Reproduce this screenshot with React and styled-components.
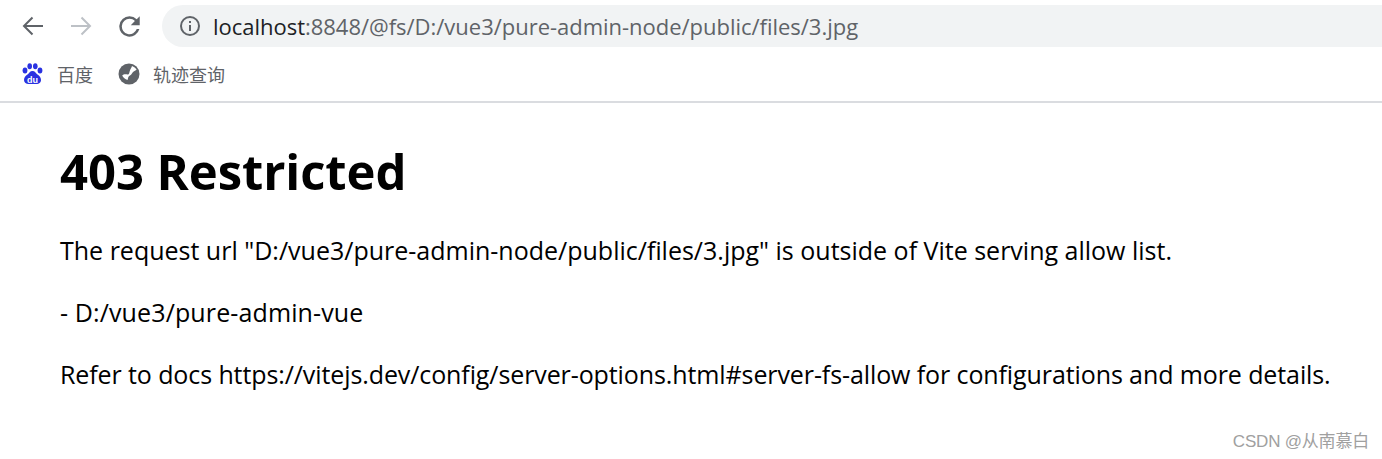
import React from 'react';
import styled, { createGlobalStyle } from 'styled-components';

const Global = createGlobalStyle`
  html, body { margin: 0; padding: 0; background: #fff; }
  body { font-family: "Open Sans", "Noto Sans CJK SC", sans-serif; overflow: hidden; }
`;
const Page = styled.div`
  position: relative;
  width: 1382px;
  height: 459px;
  overflow: hidden;
`;
const Toolbar = styled.div`
  display: flex;
  align-items: center;
  height: 42px;
  padding: 5px 0 0 20px;
`;
const NavButton = styled.div`
  display: flex;
  width: 26px;
  height: 26px;
  align-items: center;
  justify-content: center;
  margin-right: 22px;
  &:nth-child(3) { margin-right: 20px; }
`;
const AddressBar = styled.div`
  flex: 1;
  display: flex;
  align-items: center;
  height: 42px;
  padding-left: 17px;
  background: #f1f3f4;
  border-radius: 21px 0 0 21px;
`;
const Url = styled.span`
  margin-left: 12px;
  font-size: 22px;
  letter-spacing: -0.02px;
  color: #5f6368;
  white-space: nowrap;
`;
const Host = styled.span`
  color: #202124;
`;
const BookmarkBar = styled.div`
  display: flex;
  align-items: center;
  height: 56px;
  padding-left: 21px;
  border-bottom: 2px solid #dadce0;
  box-sizing: border-box;
  gap: 25px;
`;
const Bookmark = styled.div`
  display: flex;
  align-items: center;
  font-family: "Noto Sans CJK SC", sans-serif;
  font-size: 18px;
  color: #5f6368;
  gap: 13px;
`;
const Content = styled.main`
  padding: 35px 0 0 60px;
  color: #000;
`;
const Title = styled.h1`
  margin: 0 0 29px;
  font-size: 49px;
  line-height: 66px;
  font-weight: 700;
  letter-spacing: -0.07px;
`;
const Para = styled.p`
  margin: 0 0 28px;
  font-size: 25px;
  line-height: 34px;
  letter-spacing: ${p => p.$track}px;
  white-space: nowrap;
`;
const Watermark = styled.div`
  position: absolute;
  right: 13px;
  bottom: 7px;
  font-family: "Liberation Sans", "Noto Sans CJK SC", sans-serif;
  font-size: 17px;
  letter-spacing: -0.2px;
  color: #a0a0a0;
`;

const Arrow = ({ color, flip }) => (
  <svg width="24" height="24" viewBox="0 0 24 24" style={flip ? { transform: 'scaleX(-1)' } : undefined}>
    <path d="M22 12H3.500M11.500 3.500L3 12l8.500 8.500" fill="none" stroke={color} strokeWidth="2" />
  </svg>
);

export default function App() {
  return (
    <Page>
      <Global />
      <Toolbar>
        <NavButton><Arrow color="#5f6368" /></NavButton>
        <NavButton><Arrow color="#bdc1c6" flip /></NavButton>
        <NavButton>
          <svg width="23" height="23" viewBox="3 3 18 18">
            <path fill="#5f6368" d="M17.650 6.350A7.960 7.960 0 0 0 12 4a8 8 0 1 0 7.740 10h-2.080A6 6 0 1 1 12 6c1.660 0 3.140.69 4.220 1.780L13 11h7V4z" />
          </svg>
        </NavButton>
        <AddressBar>
          <svg width="22" height="22" viewBox="0 0 22 22">
            <circle cx="11" cy="11" r="9" fill="none" stroke="#5f6368" strokeWidth="2" />
            <rect x="10" y="10" width="2" height="6" fill="#5f6368" />
            <rect x="10" y="6" width="2" height="2" fill="#5f6368" />
          </svg>
          <Url><Host>localhost</Host>:8848/@fs/D:/vue3/pure-admin-node/public/files/3.jpg</Url>
        </AddressBar>
      </Toolbar>
      <BookmarkBar>
        <Bookmark>
          <svg width="23" height="22" viewBox="0 0 23 22">
            <g fill="#2932e1">
              <ellipse cx="4" cy="7.500" rx="2.400" ry="3" />
              <ellipse cx="8.700" cy="3.200" rx="2.300" ry="3" />
              <ellipse cx="14.300" cy="3.200" rx="2.300" ry="3" />
              <ellipse cx="19" cy="7.500" rx="2.400" ry="3" />
              <path d="M11.500 8c-2.500 0-3.300 2.200-5 3.600C4.600 13 3 14.600 3 17c0 2.800 2.300 4 4.500 4h8c2.200 0 4.500-1.200 4.500-4 0-2.400-1.600-4-3.500-5.400C14.800 10.200 14 8 11.500 8z" />
            </g>
            <text x="11.500" y="19.500" textAnchor="middle" fontFamily="Liberation Sans" fontWeight="700" fontSize="9" fill="#fff">du</text>
          </svg>
          百度
        </Bookmark>
        <Bookmark>
          <svg width="22" height="22" viewBox="0 0 22 22">
            <circle cx="11" cy="11" r="10.500" fill="#5f6368" />
            <path fill="#fff" d="M14 3c2 .7 3.600 2 4.600 3.800-1 .9-2.300 1.300-3.300 2-1.100.8-1.300 2.100-2.300 3-.9.800-2 1.200-2.600 2.200-.5.800-.4 2-.9 3-2.400-.6-4.300-2.300-5.300-4.500 1-1 2.300-1.500 3.600-1.300 1.100.1 2.200.5 3-.3.700-.7.600-1.800 1-2.900.4-1.600 1.800-3.100 2.200-5z" />
          </svg>
          轨迹查询
        </Bookmark>
      </BookmarkBar>
      <Content>
        <Title>403 Restricted</Title>
        <Para $track={0}>The request url "D:/vue3/pure-admin-node/public/files/3.jpg" is outside of Vite serving allow list.</Para>
        <Para $track={0.12}>- D:/vue3/pure-admin-vue</Para>
        <Para $track={-0.1}>Refer to docs https://vitejs.dev/config/server-options.html#server-fs-allow for configurations and more details.</Para>
      </Content>
      <Watermark>CSDN @从南慕白</Watermark>
    </Page>
  );
}
